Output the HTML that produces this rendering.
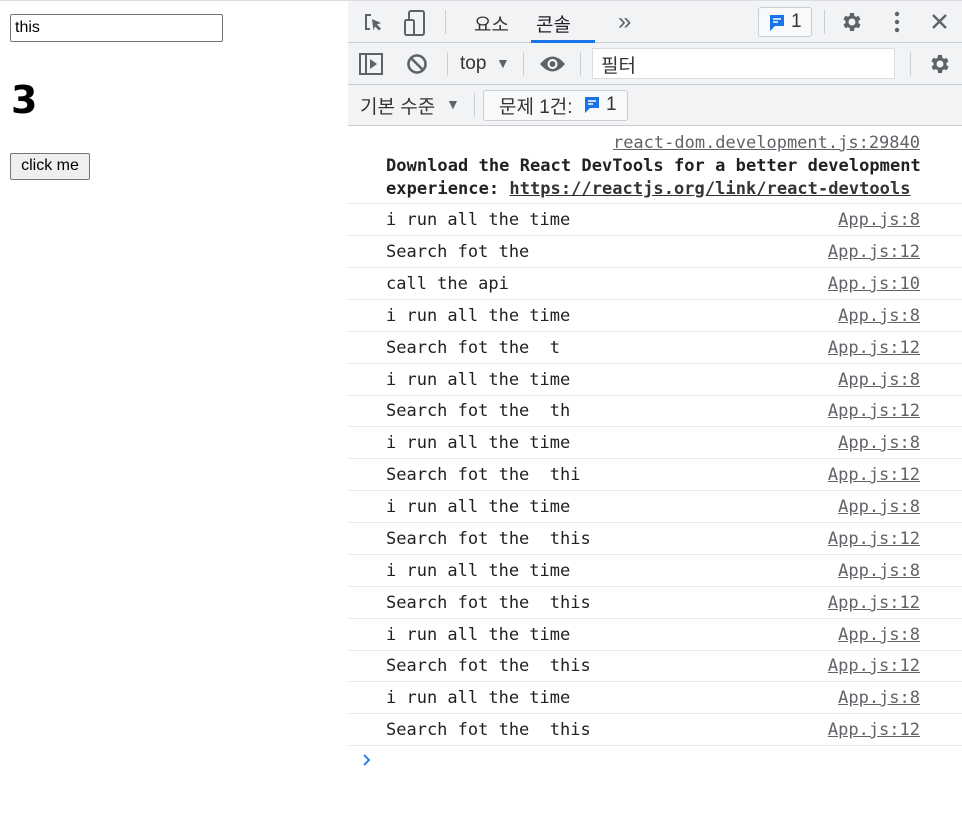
<!DOCTYPE html>
<html><head><meta charset="utf-8"><style>
*{box-sizing:border-box;margin:0;padding:0}
body{width:962px;height:822px;background:#fff;position:relative;overflow:hidden;font-family:"Liberation Sans","Noto Sans CJK KR",sans-serif}
.topline{position:absolute;left:0;top:0;width:962px;height:1px;background:#dadce0}
#inp{position:absolute;left:10px;top:14px;width:213px;height:28px;border:1px solid #767676;border-radius:2px;font-size:16px;padding:2px 4px;line-height:22px}
#num{position:absolute;left:11px;top:78px;font-size:38px;font-weight:bold;font-family:"DejaVu Sans",sans-serif}
#btn{position:absolute;left:10px;top:153px;width:80px;height:27px;border:1px solid #767676;border-radius:2px;background:#efefef;font-size:16px;text-align:center;line-height:24px}
.dt{position:absolute;left:348px;top:1px;width:614px;height:821px;background:#fff}
.bar{position:absolute;left:0;width:614px;background:#f1f3f4;border-bottom:1px solid #cacdd1}
.t{position:absolute;font-size:19px;color:#333;white-space:nowrap}
.sep{position:absolute;width:1px;background:#cacdd1}
.ico{position:absolute}
.row{position:absolute;left:0;width:614px;height:32px;border-bottom:1px solid #e8eaed;font-family:"DejaVu Sans Mono","Liberation Mono",monospace;font-size:17px;color:#202124}
.row .m{position:absolute;left:38px;top:6px;white-space:pre}
.row .s{position:absolute;right:42px;top:6px;color:#5f6368;text-decoration:underline}
</style></head><body>
<div class="topline"></div>
<div id="inp">this</div>
<div id="num">3</div>
<div id="btn">click me</div>
<div class="dt">
<div class="bar" style="top:0;height:42px">
  <svg class="ico" style="left:14px;top:10px" width="24" height="24" viewBox="0 0 24 24"><path d="M9 4H4v14h4" fill="none" stroke="#5f6368" stroke-width="2"/><path d="M10 8l9 4-4 1.5 4 4-2 2-4-4-1.5 4z" fill="#5f6368"/></svg>
  <svg class="ico" style="left:55px;top:8px" width="24" height="28" viewBox="0 0 24 28"><rect x="6" y="2" width="15" height="24" rx="2" fill="none" stroke="#5f6368" stroke-width="2"/><rect x="2" y="11" width="9" height="15" rx="1.5" fill="#f1f3f4" stroke="#5f6368" stroke-width="2"/></svg>
  <div class="sep" style="left:97px;top:9px;height:24px"></div>
  <div class="t" style="left:126px;top:9px">요소</div>
  <div class="t" style="left:188px;top:9px;color:#202124">콘솔</div>
  <div style="position:absolute;left:183px;top:39px;width:64px;height:3px;background:#1a73e8"></div>
  <div class="t" style="left:270px;top:7px;color:#5f6368;font-size:24px">»</div>
  <div style="position:absolute;left:410px;top:6px;width:54px;height:30px;border:1px solid #cacdd1;border-radius:3px;background:#f8f9fa"></div>
  <svg class="ico" style="left:421px;top:13px" width="16" height="18" viewBox="0 0 16 18"><path d="M1 1h14v11H6l-5 5z" fill="#1a73e8"/><path d="M4 5h8M4 8h5" stroke="#fff" stroke-width="1.6"/></svg>
  <div class="t" style="left:443px;top:10px">1</div>
  <div class="sep" style="left:476px;top:9px;height:24px"></div>
  <svg class="ico" style="left:492px;top:9px" width="24" height="24" viewBox="0 0 24 24"><path fill="#5f6368" d="M19.4 13a7.5 7.5 0 000-2l2.1-1.6-2-3.5-2.5 1a7 7 0 00-1.7-1L15 3h-4l-.4 2.7a7 7 0 00-1.7 1l-2.5-1-2 3.5L6.6 11a7.5 7.5 0 000 2l-2.1 1.6 2 3.5 2.5-1a7 7 0 001.7 1L11 21h4l.4-2.7a7 7 0 001.7-1l2.5 1 2-3.5zM13 15.5a3.5 3.5 0 110-7 3.5 3.5 0 010 7z" transform="translate(-1 0)"/></svg>
  <svg class="ico" style="left:545px;top:9px" width="8" height="24" viewBox="0 0 8 24"><circle cx="4" cy="4" r="2.2" fill="#5f6368"/><circle cx="4" cy="12" r="2.2" fill="#5f6368"/><circle cx="4" cy="20" r="2.2" fill="#5f6368"/></svg>
  <svg class="ico" style="left:583px;top:12px" width="17" height="17" viewBox="0 0 17 17"><path d="M2 2l13 13M15 2L2 15" stroke="#5f6368" stroke-width="2.4"/></svg>
</div>
<div class="bar" style="top:42px;height:42px">
  <svg class="ico" style="left:11px;top:10px" width="24" height="22" viewBox="0 0 24 22"><rect x="1" y="1" width="22" height="20" fill="none" stroke="#5f6368" stroke-width="2"/><path d="M7 1v20" stroke="#5f6368" stroke-width="2"/><path d="M11 6l7 5-7 5z" fill="#5f6368"/></svg>
  <svg class="ico" style="left:58px;top:10px" width="22" height="22" viewBox="0 0 22 22"><circle cx="11" cy="11" r="8.5" fill="none" stroke="#5f6368" stroke-width="2.6"/><path d="M5 5l12 12" stroke="#5f6368" stroke-width="2.6"/></svg>
  <div class="sep" style="left:99px;top:9px;height:24px"></div>
  <div class="t" style="left:112px;top:10px">top</div>
  <div class="t" style="left:148px;top:12px;font-size:14px;color:#5f6368">▼</div>
  <div class="sep" style="left:175px;top:9px;height:24px"></div>
  <svg class="ico" style="left:191px;top:12px" width="27" height="18" viewBox="0 0 27 18"><path d="M1 9Q13.5-6 26 9 13.5 24 1 9z" fill="#5f6368"/><circle cx="13.5" cy="9" r="5" fill="#fff"/><circle cx="13.5" cy="9" r="3" fill="#5f6368"/></svg>
  <div class="sep" style="left:232px;top:9px;height:24px"></div>
  <div style="position:absolute;left:244px;top:5px;width:303px;height:31px;background:#fff;border:1px solid #dadce0"></div>
  <div class="t" style="left:253px;top:8px">필터</div>
  <div class="sep" style="left:562px;top:9px;height:24px"></div>
  <svg class="ico" style="left:580px;top:9px" width="24" height="24" viewBox="0 0 24 24"><path fill="#5f6368" d="M19.4 13a7.5 7.5 0 000-2l2.1-1.6-2-3.5-2.5 1a7 7 0 00-1.7-1L15 3h-4l-.4 2.7a7 7 0 00-1.7 1l-2.5-1-2 3.5L6.6 11a7.5 7.5 0 000 2l-2.1 1.6 2 3.5 2.5-1a7 7 0 001.7 1L11 21h4l.4-2.7a7 7 0 001.7-1l2.5 1 2-3.5zM13 15.5a3.5 3.5 0 110-7 3.5 3.5 0 010 7z" transform="translate(-1 0)"/></svg>
</div>
<div class="bar" style="top:84px;height:41px">
  <div class="t" style="left:12px;top:7px">기본 수준</div>
  <div class="t" style="left:98px;top:11px;font-size:14px;color:#5f6368">▼</div>
  <div class="sep" style="left:126px;top:8px;height:24px"></div>
  <div style="position:absolute;left:135px;top:5px;width:145px;height:31px;border:1px solid #cacdd1;border-radius:3px;background:#f8f9fa"></div>
  <div class="t" style="left:151px;top:7px">문제 1건:</div>
  <svg class="ico" style="left:236px;top:11px" width="16" height="18" viewBox="0 0 16 18"><path d="M1 1h14v11H6l-5 5z" fill="#1a73e8"/><path d="M4 5h8M4 8h5" stroke="#fff" stroke-width="1.6"/></svg>
  <div class="t" style="left:258px;top:9px">1</div>
</div>
<div class="row" style="top:125px;height:78px">
  <div class="s" style="top:7px">react-dom.development.js:29840</div>
  <div class="m" style="top:29px;font-weight:bold;line-height:23px;letter-spacing:0.05px">Download the React DevTools for a better development
experience: <u style="color:#333">https://reactjs.org/link/react-devtools</u></div>
</div>
<div class="row" style="top:203px"><div class="m">i run all the time</div><div class="s">App.js:8</div></div>
<div class="row" style="top:235px"><div class="m">Search fot the</div><div class="s">App.js:12</div></div>
<div class="row" style="top:267px"><div class="m">call the api</div><div class="s">App.js:10</div></div>
<div class="row" style="top:299px"><div class="m">i run all the time</div><div class="s">App.js:8</div></div>
<div class="row" style="top:331px"><div class="m">Search fot the  t</div><div class="s">App.js:12</div></div>
<div class="row" style="top:363px"><div class="m">i run all the time</div><div class="s">App.js:8</div></div>
<div class="row" style="top:394px"><div class="m">Search fot the  th</div><div class="s">App.js:12</div></div>
<div class="row" style="top:426px"><div class="m">i run all the time</div><div class="s">App.js:8</div></div>
<div class="row" style="top:458px"><div class="m">Search fot the  thi</div><div class="s">App.js:12</div></div>
<div class="row" style="top:490px"><div class="m">i run all the time</div><div class="s">App.js:8</div></div>
<div class="row" style="top:522px"><div class="m">Search fot the  this</div><div class="s">App.js:12</div></div>
<div class="row" style="top:554px"><div class="m">i run all the time</div><div class="s">App.js:8</div></div>
<div class="row" style="top:586px"><div class="m">Search fot the  this</div><div class="s">App.js:12</div></div>
<div class="row" style="top:618px"><div class="m">i run all the time</div><div class="s">App.js:8</div></div>
<div class="row" style="top:649px"><div class="m">Search fot the  this</div><div class="s">App.js:12</div></div>
<div class="row" style="top:681px"><div class="m">i run all the time</div><div class="s">App.js:8</div></div>
<div class="row" style="top:713px"><div class="m">Search fot the  this</div><div class="s">App.js:12</div></div>
<svg class="ico" style="left:14px;top:752px" width="10" height="14" viewBox="0 0 10 14"><path d="M2 2l5 5-5 5" fill="none" stroke="#1a73e8" stroke-width="1.8"/></svg>
</div>
</body></html>
